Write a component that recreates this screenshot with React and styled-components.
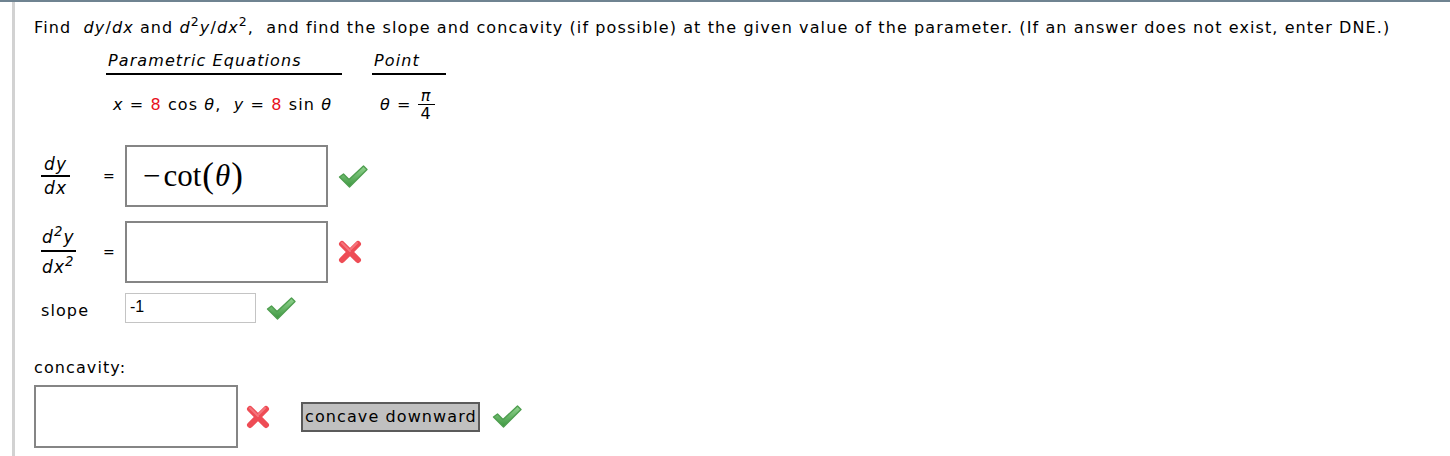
import React from "react";
import styled, { createGlobalStyle } from "styled-components";

const Global = createGlobalStyle`
  html, body {
    margin: 0;
    padding: 0;
    background: #fff;
  }
  body {
    font-family: "DejaVu Sans", Verdana, sans-serif;
    color: #000;
  }
`;

const Page = styled.div`
  border-top: 2px solid #6f8391;
  height: 454px;
  display: flex;
`;

const Panel = styled.div`
  margin-left: 12px;
  border-left: 3px solid #d2d2d2;
  padding: 14px 0 0 19px;
  flex: 1;
  font-size: 16px;
  letter-spacing: 1.1px;
`;

const Prompt = styled.p`
  margin: 0;
  line-height: 24px;
  white-space: nowrap;
`;

const I = styled.i`
  font-style: italic;
`;

const Sup = styled.sup`
  font-size: 0.78em;
  line-height: 0;
  vertical-align: 0.55em;
`;

const Given = styled.div`
  display: grid;
  grid-template-columns: 236px 74px;
  column-gap: 30px;
  margin: 12px 0 0 72px;
`;

const Head = styled.div`
  font-style: italic;
  border-bottom: 2px solid #000;
  padding: 0 0 3px 2px;
  line-height: 18px;
`;

const Cell = styled.div`
  display: flex;
  align-items: center;
  height: 58px;
  white-space: nowrap;
  padding-left: ${(p) => p.$pad || 0}px;
`;

const Red = styled.span`
  color: #e8111c;
`;

const Frac = styled.span`
  display: inline-flex;
  flex-direction: column;
  align-items: center;
  vertical-align: middle;
  font-size: ${(p) => p.$size || 16}px;
  line-height: ${(p) => p.$lh || 16}px;
  font-style: ${(p) => (p.$italic ? "italic" : "normal")};
`;

const Num = styled.span`
  border-bottom: ${(p) => p.$bar || 1}px solid #000;
  padding: 0 ${(p) => p.$padX || 1}px;
  text-align: center;
`;

const Den = styled.span`
  padding-top: ${(p) => p.$padTop || 0}px;
`;

const Rows = styled.div`
  display: grid;
  grid-template-columns: 69px 22px 203px auto;
  align-items: center;
  margin-top: 12px;
  row-gap: 14px;
`;

const Label = styled.div`
  padding-left: 7px;
  display: flex;
  align-items: center;
`;

const Eq = styled.div`
  font-size: 14px;
`;

const MathBox = styled.div`
  box-sizing: border-box;
  width: 203px;
  height: 62px;
  border: 2px solid #858585;
  background: #fff;
  display: flex;
  align-items: center;
  padding-left: 16px;
  font-family: "Liberation Serif", "Times New Roman", serif;
  font-size: 31px;
  letter-spacing: 0;
`;

const Op = styled.span`
  margin-right: ${(p) => p.$r || 0}px;
`;

const Paren = styled.span`
  font-size: 35px;
  margin: 0 1px;
`;

const Mark = styled.div`
  padding-left: ${(p) => p.$pad || 9}px;
  display: flex;
  align-items: center;
`;

const SlopeRow = styled.div`
  display: grid;
  grid-template-columns: 91px 131px auto;
  align-items: center;
  margin-top: 10px;
`;

const SlopeLabel = styled.div`
  padding-left: 7px;
  padding-top: 4px;
`;

const SmallInput = styled.div`
  box-sizing: border-box;
  width: 131px;
  height: 30px;
  border: 1px solid #c4c4c4;
  font-family: "Liberation Sans", Arial, sans-serif;
  font-size: 16px;
  letter-spacing: 0;
  padding: 4px 0 0 4px;
`;

const Concavity = styled.div`
  margin-top: 35px;
  line-height: 20px;
`;

const ConcRow = styled.div`
  display: flex;
  align-items: center;
  margin-top: 7px;
`;

const EmptyBox = styled.div`
  box-sizing: border-box;
  width: 204px;
  height: 63px;
  border: 2px solid #858585;
`;

const Choice = styled.div`
  margin-left: 30px;
  box-sizing: border-box;
  height: 30px;
  padding: 0 1px 0 2px;
  border: 2px solid #5b5b5b;
  background: #c0c0c0;
  line-height: 26px;
  letter-spacing: 1.1px;
`;

const Check = () => (
  <svg width="32" height="25" viewBox="0 0 32 25">
    <defs>
      <linearGradient id="cg" x1="0" y1="0" x2="0" y2="1">
        <stop offset="0" stopColor="#93d490" />
        <stop offset="1" stopColor="#3d9740" />
      </linearGradient>
    </defs>
    <path
      d="M2.5 13 L6.5 10 L12 15.5 L26.5 2 L30 5.5 L12.5 23 Z"
      fill="url(#cg)"
      stroke="#4e9e4f"
      strokeWidth="1.4"
      strokeLinejoin="round"
    />
  </svg>
);

const Cross = () => (
  <svg width="26" height="26" viewBox="0 0 26 26">
    <g stroke="#ee4c55" strokeWidth="6" strokeLinecap="round">
      <line x1="5" y1="5" x2="21" y2="21" />
      <line x1="21" y1="5" x2="5" y2="21" />
    </g>
    <g stroke="#f77f86" strokeWidth="2" strokeLinecap="round" opacity="0.8">
      <line x1="5" y1="4" x2="13" y2="12" />
      <line x1="20" y1="4" x2="14" y2="10" />
    </g>
  </svg>
);

export default function App() {
  return (
    <Page>
      <Global />
      <Panel>
        <Prompt>
          Find&nbsp; <I>dy</I>/<I>dx</I> and <I>d</I>
          <Sup>2</Sup>
          <I>y</I>/<I>dx</I>
          <Sup>2</Sup>,&nbsp; and find the slope and concavity (if possible)
          at the given value of the parameter. (If an answer does not exist,
          enter DNE.)
        </Prompt>

        <Given>
          <Head>Parametric Equations</Head>
          <Head>Point</Head>
          <Cell $pad={7}>
            <I>x</I>&nbsp;=&nbsp;<Red>8</Red>&nbsp;cos&nbsp;<I>θ</I>,&nbsp;&nbsp;
            <I>y</I>&nbsp;=&nbsp;<Red>8</Red>&nbsp;sin&nbsp;<I>θ</I>
          </Cell>
          <Cell $pad={8}>
            <I>θ</I>&nbsp;=&nbsp;
            <Frac $lh={17}>
              <Num $padX={3}>
                <I>π</I>
              </Num>
              <Den>4</Den>
            </Frac>
          </Cell>
        </Given>

        <Rows>
          <Label>
            <Frac $italic $size={17} $lh={21}>
              <Num $bar={2} $padX={3}>dy</Num>
              <Den $padTop={1}>dx</Den>
            </Frac>
          </Label>
          <Eq>=</Eq>
          <MathBox>
            <Op $r={3}>−</Op>cot<Paren>(</Paren>
            <I>θ</I>
            <Paren>)</Paren>
          </MathBox>
          <Mark $pad={9}>
            <Check />
          </Mark>

          <Label>
            <Frac $italic $size={17} $lh={26}>
              <Num $bar={2} $padX={1}>
                d<Sup>2</Sup>y
              </Num>
              <Den $padTop={2}>
                dx<Sup>2</Sup>
              </Den>
            </Frac>
          </Label>
          <Eq>=</Eq>
          <MathBox />
          <Mark $pad={9}>
            <Cross />
          </Mark>
        </Rows>

        <SlopeRow>
          <SlopeLabel>slope</SlopeLabel>
          <SmallInput>-1</SmallInput>
          <Mark $pad={9}>
            <Check />
          </Mark>
        </SlopeRow>

        <Concavity>concavity:</Concavity>
        <ConcRow>
          <EmptyBox />
          <Mark $pad={7}>
            <Cross />
          </Mark>
          <Choice>concave downward</Choice>
          <Mark $pad={11}>
            <Check />
          </Mark>
        </ConcRow>
      </Panel>
    </Page>
  );
}
